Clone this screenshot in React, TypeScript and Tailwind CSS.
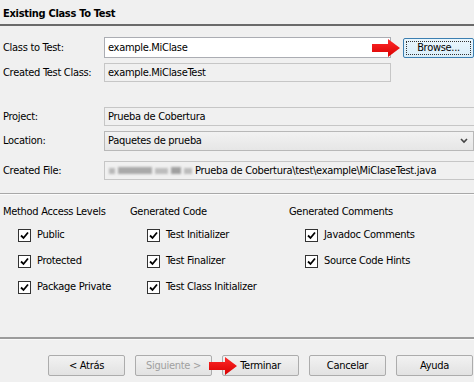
import React from "react";

function RedArrow({ className }: { className?: string }) {
  return (
    <svg width="28" height="18" viewBox="0 0 28 18" className={className}>
      <defs>
        <linearGradient id="ra" x1="0" y1="0" x2="0" y2="1">
          <stop offset="0" stopColor="#ff2a2a" />
          <stop offset="1" stopColor="#d80000" />
        </linearGradient>
      </defs>
      <polygon points="0,5 16,5 16,0 28,9 16,18 16,13 0,13" fill="url(#ra)" />
    </svg>
  );
}

function Check({ label }: { label: string }) {
  return (
    <div className="flex items-center h-[26px]">
      <div className="w-[13px] h-[13px] border border-[#333] bg-white flex items-center justify-center">
        <svg width="9" height="9" viewBox="0 0 9 9">
          <path d="M1 4.5 L3.5 7 L8 1.5" stroke="#000" strokeWidth="1.8" fill="none" />
        </svg>
      </div>
      <span className="ml-[6px]">{label}</span>
    </div>
  );
}

function Btn({ children, disabled }: { children: React.ReactNode; disabled?: boolean }) {
  return (
    <div
      className={`w-[77px] h-[21px] border border-[#acacac] rounded-[2px] bg-gradient-to-b from-[#f2f2f2] to-[#e2e2e2] flex items-center justify-center ${
        disabled ? "text-[#a0a0a0]" : "text-black"
      }`}
    >
      {children}
    </div>
  );
}

export default function App() {
  return (
    <div className="w-[474px] h-[382px] overflow-hidden bg-[#f0f0f0] text-[11px] leading-[14px] tracking-[-0.3px] text-black font-['DejaVu_Sans_Condensed','DejaVu_Sans',sans-serif] flex flex-col">
      <div className="h-[24px] pt-[7px] pl-[3px] font-bold">Existing Class To Test</div>
      <div className="h-[2px] bg-[#6a6a6a]" />

      {/* Class to test */}
      <div className="mt-[11px] flex items-center h-[21px] pl-[3px]">
        <div className="w-[101px]">Class to Test:</div>
        <div className="w-[287px] h-[21px] border border-[#abadb3] bg-white flex items-center pl-[3px]">
          example.MiClase
        </div>
        <div className="w-[12px]" />
        <div className="w-[71px] h-[20px] border border-[#3c7fb1] rounded-[2px] bg-gradient-to-b from-[#eaf6fd] to-[#d9eefa] p-[2px] shrink-0">
          <div className="w-full h-full border border-dotted border-[#333] flex items-center justify-center">
            Browse...
          </div>
        </div>
      </div>
      <div className="relative h-0">
        <RedArrow className="absolute left-[372px] top-[-19px]" />
      </div>

      {/* Created test class */}
      <div className="mt-[5px] flex items-center h-[19px] pl-[3px]">
        <div className="w-[101px]">Created Test Class:</div>
        <div className="w-[287px] h-[19px] border border-[#c6c6c6] bg-[#f0f0f0] flex items-center pl-[3px]">
          example.MiClaseTest
        </div>
      </div>

      {/* Project */}
      <div className="mt-[25px] flex items-center h-[19px] pl-[3px]">
        <div className="w-[101px] shrink-0">Project:</div>
        <div className="w-[375px] shrink-0 h-[19px] border border-[#c6c6c6] bg-[#f0f0f0] flex items-center pl-[3px]">
          Prueba de Cobertura
        </div>
      </div>

      {/* Location */}
      <div className="mt-[5px] flex items-center h-[20px] pl-[3px]">
        <div className="w-[101px] shrink-0">Location:</div>
        <div className="w-[370px] shrink-0 h-[20px] border border-[#b8b8b8] bg-gradient-to-b from-[#f2f2f2] to-[#e6e6e6] flex items-center pl-[3px] justify-between pr-[5px]">
          <span>Paquetes de prueba</span>
          <svg width="8" height="6" viewBox="0 0 8 6">
            <path d="M1 1 L4 4 L7 1" stroke="#444" strokeWidth="1.6" fill="none" />
          </svg>
        </div>
      </div>

      {/* Created file */}
      <div className="mt-[10px] flex items-center h-[19px] pl-[3px]">
        <div className="w-[101px] shrink-0">Created File:</div>
        <div className="w-[375px] shrink-0 h-[19px] border border-[#c6c6c6] bg-[#f0f0f0] flex items-center pl-[4px] whitespace-nowrap">
          <div className="flex items-center gap-[3px] w-[86px] blur-[1px] shrink-0">
            <div className="w-[6px] h-[6px] bg-[#b8b8b8]" />
            <div className="w-[34px] h-[7px] bg-[#a9a9a9]" />
            <div className="w-[13px] h-[6px] bg-[#bdbdbd]" />
            <div className="w-[10px] h-[7px] bg-[#a0a0a0]" />
            <div className="w-[8px] h-[6px] bg-[#bcbcbc]" />
          </div>
          <span>Prueba de Cobertura\test\example\MiClaseTest.java</span>
        </div>
      </div>

      <div className="mt-[13px] h-[1px] bg-[#a8a8a8]" />
      <div className="h-[1px] bg-[#fbfbfb]" />

      {/* Options */}
      <div className="mt-[10px] flex pl-[3px]">
        <div className="w-[127px]">
          <div className="h-[14px]">Method Access Levels</div>
          <div className="pl-[15px] mt-[3px]">
            <Check label="Public" />
            <Check label="Protected" />
            <Check label="Package Private" />
          </div>
        </div>
        <div className="w-[159px]">
          <div className="h-[14px]">Generated Code</div>
          <div className="pl-[17px] mt-[3px]">
            <Check label="Test Initializer" />
            <Check label="Test Finalizer" />
            <Check label="Test Class Initializer" />
          </div>
        </div>
        <div>
          <div className="h-[14px]">Generated Comments</div>
          <div className="pl-[16px] mt-[3px]">
            <Check label="Javadoc Comments" />
            <Check label="Source Code Hints" />
          </div>
        </div>
      </div>

      <div className="flex-1" />
      <div className="h-[2px] bg-[#9c9c9c]" />
      <div className="h-[1px] bg-[#fafafa]" />

      {/* Buttons */}
      <div className="mt-[15px] mb-[6px] flex gap-[10px] pl-[48px] relative">
        <Btn>&lt; Atrás</Btn>
        <Btn disabled>Siguiente &gt;</Btn>
        <Btn>Terminar</Btn>
        <Btn>Cancelar</Btn>
        <Btn>Ayuda</Btn>
        <RedArrow className="absolute left-[209px] top-[2px]" />
      </div>
    </div>
  );
}
